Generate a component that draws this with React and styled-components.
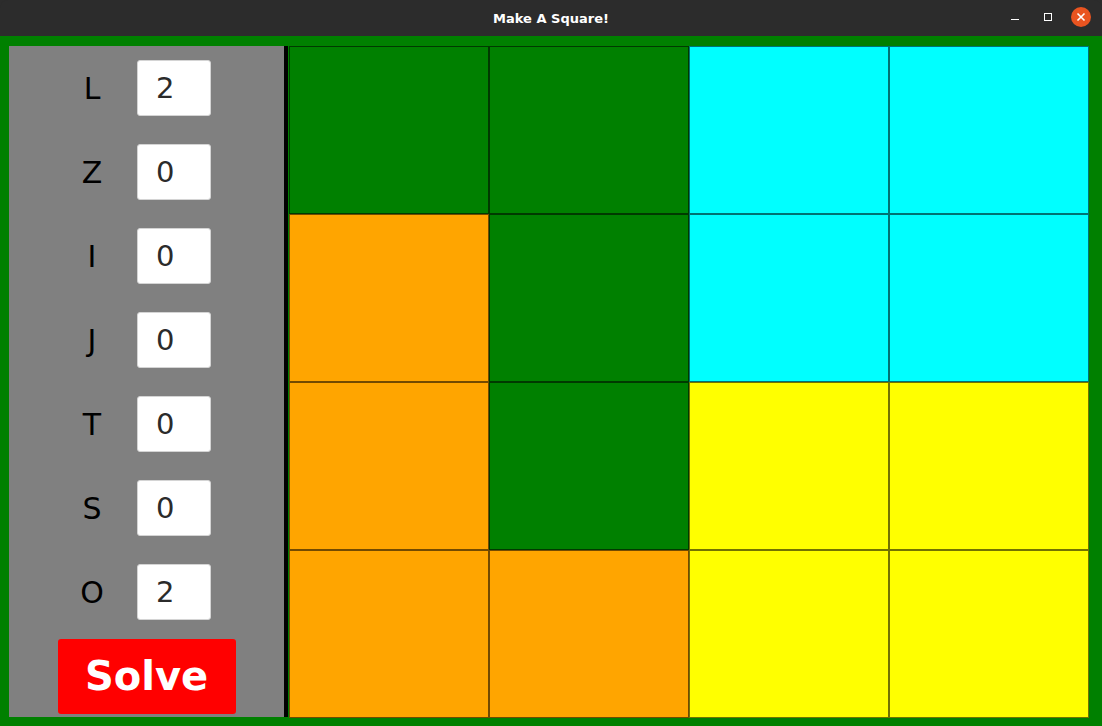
import React from 'react';
import styled, { createGlobalStyle } from 'styled-components';

const PIECES = [
  { name: 'L', count: 2 },
  { name: 'Z', count: 0 },
  { name: 'I', count: 0 },
  { name: 'J', count: 0 },
  { name: 'T', count: 0 },
  { name: 'S', count: 0 },
  { name: 'O', count: 2 },
];

const G = 'green';
const C = 'cyan';
const OR = 'orange';
const Y = 'yellow';

const BOARD = [
  [G, G, C, C],
  [OR, G, C, C],
  [OR, G, Y, Y],
  [OR, OR, Y, Y],
];

const COLORS = {
  green: '#008000',
  cyan: '#00ffff',
  orange: '#ffa500',
  yellow: '#ffff00',
};

const GlobalStyle = createGlobalStyle`
  html, body {
    margin: 0;
    padding: 0;
    background: #2c2c2c;
    overflow: hidden;
  }
  * {
    box-sizing: border-box;
  }
`;

const Window = styled.div`
  width: 1102px;
  height: 726px;
  display: flex;
  flex-direction: column;
  font-family: 'DejaVu Sans', 'Noto Sans', sans-serif;
`;

const TitleBar = styled.div`
  height: 36px;
  background: #2c2c2c;
  border-radius: 8px 8px 0 0;
  display: flex;
  align-items: center;
  justify-content: center;
  position: relative;
`;

const Title = styled.span`
  color: #ffffff;
  font-weight: bold;
  font-size: 13px;
`;

const Controls = styled.div`
  position: absolute;
  right: 11px;
  top: 7px;
  display: flex;
  align-items: center;
  gap: 13px;
`;

const CtrlButton = styled.div`
  width: 20px;
  height: 20px;
  display: flex;
  align-items: center;
  justify-content: center;
  border-radius: 50%;
  background: ${p => (p.$close ? '#e95420' : 'transparent')};
`;

const Body = styled.div`
  flex: 1;
  background: #008000;
  display: flex;
  padding: 10px 13px 8px 9px;
`;

const Panel = styled.div`
  width: 275px;
  height: 671px;
  background: #808080;
  display: flex;
  flex-direction: column;
  align-items: center;
  padding-top: 14px;
`;

const List = styled.div`
  display: flex;
  flex-direction: column;
  gap: 28px;
`;

const Row = styled.div`
  display: flex;
  align-items: center;
  height: 56px;
  margin-left: -20px;
`;

const Label = styled.span`
  width: 60px;
  text-align: center;
  font-size: 30px;
  color: #000000;
  margin-right: 15px;
`;

const CountInput = styled.input`
  width: 74px;
  height: 56px;
  border: 1px solid #d4d4d4;
  border-radius: 3px;
  background: #ffffff;
  padding: 0 0 0 18px;
  font-family: 'DejaVu Sans', 'Noto Sans', sans-serif;
  font-size: 29px;
  color: #2b2b2b;
  outline: none;
`;

const SolveButton = styled.button`
  all: unset;
  margin-top: 19px;
  width: 178px;
  height: 75px;
  background: #ff0000;
  border-radius: 3px;
  color: #ffffff;
  font-family: 'DejaVu Sans', sans-serif;
  font-weight: bold;
  font-size: 40px;
  text-align: center;
  line-height: 75px;
  cursor: pointer;
`;

const Divider = styled.div`
  width: 4px;
  height: 671px;
  background: #000000;
  margin-right: 1px;
`;

const Board = styled.div`
  display: grid;
  grid-template-columns: repeat(4, 200px);
  grid-template-rows: repeat(4, 168px);
`;

const Cell = styled.div`
  background: ${p => COLORS[p.$color]};
  border: 1px solid rgba(0, 0, 0, 0.55);
`;

export default function App() {
  return (
    <Window>
      <GlobalStyle />
      <TitleBar>
        <Title>Make A Square!</Title>
        <Controls>
          <CtrlButton>
            <svg width="10" height="10" viewBox="0 0 10 10">
              <rect x="1" y="7" width="8" height="1" fill="#ffffff" />
            </svg>
          </CtrlButton>
          <CtrlButton>
            <svg width="10" height="10" viewBox="0 0 10 10">
              <rect x="1.5" y="1.5" width="7" height="7" fill="none" stroke="#ffffff" strokeWidth="1" />
            </svg>
          </CtrlButton>
          <CtrlButton $close>
            <svg width="10" height="10" viewBox="0 0 10 10">
              <path d="M1.5 1.5 L8.5 8.5 M8.5 1.5 L1.5 8.5" stroke="#ffffff" strokeWidth="1.6" />
            </svg>
          </CtrlButton>
        </Controls>
      </TitleBar>
      <Body>
        <Panel>
          <List>
            {PIECES.map(piece => (
              <Row key={piece.name}>
                <Label>{piece.name}</Label>
                <CountInput type="text" defaultValue={piece.count} />
              </Row>
            ))}
          </List>
          <SolveButton type="button">Solve</SolveButton>
        </Panel>
        <Divider />
        <Board>
          {BOARD.map((row, r) =>
            row.map((color, c) => <Cell key={`${r}-${c}`} $color={color} />)
          )}
        </Board>
      </Body>
    </Window>
  );
}
